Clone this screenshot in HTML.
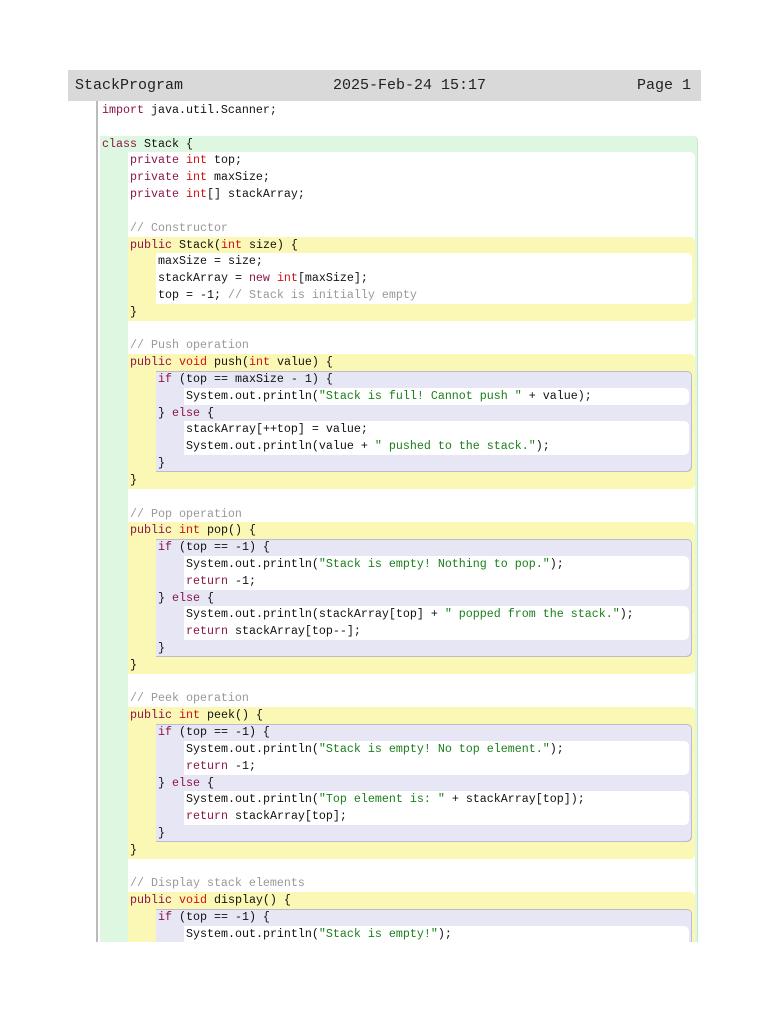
<!DOCTYPE html>
<html><head><meta charset="utf-8"><style>
body{margin:0;background:#fff;width:768px;height:1024px;position:relative;overflow:hidden}
.hdr{position:absolute;left:68px;top:70px;width:633px;height:31px;background:#d9d9d9;font:15px "Liberation Mono",monospace;color:#222}
.hdr span{position:absolute;top:7px}
.gut{position:absolute;left:96px;top:101px;width:2px;height:841px;background:#bbb}
.code{position:absolute;left:100px;top:102px;width:598px;height:840px;overflow:hidden;font:11.67px/16.82px "Liberation Mono",monospace;color:#111}
.l{height:16.82px;padding-left:2px;white-space:pre}
.blk{border-radius:0 5px 5px 0}
.g{background:#def7e0;box-shadow:inset -1px 0 0 #c9e6cc}
.y{background:#fbf7b4}
.p{background:#e6e6f5;box-shadow:inset -1px -1px 0 #bcbcd0,inset 0 1px 0 #bcbcd0}
.body{margin-left:28px;margin-right:3px;border-radius:0 5px 5px 0}
.w{background:#fff}
.k{color:#8b1548}.t{color:#d01010}.s{color:#1a7f1a}.c{color:#999}
</style></head><body>
<div class="hdr"><span style="left:7px">StackProgram</span><span style="left:265px">2025-Feb-24 15:17</span><span style="left:569px">Page 1</span></div>
<div class="gut"></div>
<div class="code">
<div class="l"><span class="k">import</span> java.util.Scanner;</div>
<div class="l"> </div>
<div class="blk g">
<div class="l"><span class="k">class</span> Stack {</div>
<div class="body w">
<div class="l"><span class="k">private</span> <span class="t">int</span> top;</div>
<div class="l"><span class="k">private</span> <span class="t">int</span> maxSize;</div>
<div class="l"><span class="k">private</span> <span class="t">int</span>[] stackArray;</div>
<div class="l"> </div>
<div class="l c">// Constructor</div>
<div class="blk y">
<div class="l"><span class="k">public</span> Stack(<span class="t">int</span> size) {</div>
<div class="body w">
<div class="l">maxSize = size;</div>
<div class="l">stackArray = <span class="k">new</span> <span class="t">int</span>[maxSize];</div>
<div class="l">top = -1; <span class="c">// Stack is initially empty</span></div>
</div>
<div class="l">}</div>
</div>
<div class="l"> </div>
<div class="l c">// Push operation</div>
<div class="blk y">
<div class="l"><span class="k">public</span> <span class="t">void</span> push(<span class="t">int</span> value) {</div>
<div class="body">
<div class="blk p">
<div class="l"><span class="k">if</span> (top == maxSize - 1) {</div>
<div class="body w"><div class="l">System.out.println(<span class="s">"Stack is full! Cannot push "</span> + value);</div></div>
<div class="l">} <span class="k">else</span> {</div>
<div class="body w"><div class="l">stackArray[++top] = value;</div><div class="l">System.out.println(value + <span class="s">" pushed to the stack."</span>);</div></div>
<div class="l">}</div>
</div>
</div>
<div class="l">}</div>
</div>
<div class="l"> </div>
<div class="l c">// Pop operation</div>
<div class="blk y">
<div class="l"><span class="k">public</span> <span class="t">int</span> pop() {</div>
<div class="body">
<div class="blk p">
<div class="l"><span class="k">if</span> (top == -1) {</div>
<div class="body w"><div class="l">System.out.println(<span class="s">"Stack is empty! Nothing to pop."</span>);</div><div class="l"><span class="k">return</span> -1;</div></div>
<div class="l">} <span class="k">else</span> {</div>
<div class="body w"><div class="l">System.out.println(stackArray[top] + <span class="s">" popped from the stack."</span>);</div><div class="l"><span class="k">return</span> stackArray[top--];</div></div>
<div class="l">}</div>
</div>
</div>
<div class="l">}</div>
</div>
<div class="l"> </div>
<div class="l c">// Peek operation</div>
<div class="blk y">
<div class="l"><span class="k">public</span> <span class="t">int</span> peek() {</div>
<div class="body">
<div class="blk p">
<div class="l"><span class="k">if</span> (top == -1) {</div>
<div class="body w"><div class="l">System.out.println(<span class="s">"Stack is empty! No top element."</span>);</div><div class="l"><span class="k">return</span> -1;</div></div>
<div class="l">} <span class="k">else</span> {</div>
<div class="body w"><div class="l">System.out.println(<span class="s">"Top element is: "</span> + stackArray[top]);</div><div class="l"><span class="k">return</span> stackArray[top];</div></div>
<div class="l">}</div>
</div>
</div>
<div class="l">}</div>
</div>
<div class="l"> </div>
<div class="l c">// Display stack elements</div>
<div class="blk y">
<div class="l"><span class="k">public</span> <span class="t">void</span> display() {</div>
<div class="body">
<div class="blk p">
<div class="l"><span class="k">if</span> (top == -1) {</div>
<div class="body w"><div class="l">System.out.println(<span class="s">"Stack is empty!"</span>);</div><div class="l"><span class="k">return</span>;</div></div>
<div class="l">}</div>
</div>
</div>
<div class="l">}</div>
</div>
</div>
</div>
</div>
</body></html>
